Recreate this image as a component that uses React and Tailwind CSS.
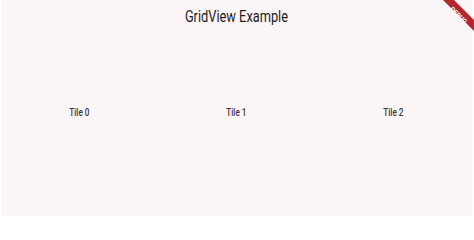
import React from 'react';

const tiles = ['Tile 0', 'Tile 1', 'Tile 2'];

const DebugBanner = () => (
    <svg className="absolute top-0 right-0" width="40" height="40" viewBox="0 0 40 40">
        <polygon points="9,0 20,0 40,20 40,31" fill="#b3262f" />
        <text
            x="0"
            y="0"
            transform="translate(24.5 15.5) rotate(45)"
            textAnchor="middle"
            dominantBaseline="central"
            fill="#ffffff"
            fontSize="6.5"
            fontWeight="700"
            fontFamily="Roboto, sans-serif"
        >
            DEBUG
        </text>
    </svg>
);

const App = () => {
    return (
        <div className="relative w-[474px] h-[219px] bg-white pl-px pr-[2px] pb-[3px] font-['Roboto',sans-serif]">
            <div className="h-full bg-[#fcf6f9] overflow-hidden">
                <header className="h-[34px] flex items-center justify-center">
                    <h1 className="text-[16px] leading-none text-[#1d1b20] scale-x-[0.8]">GridView Example</h1>
                </header>
                <div className="grid grid-cols-3">
                    {tiles.map((t) => (
                        <div key={t} className="aspect-square flex items-center justify-center">
                            <span className="text-[10px] font-medium text-[#3a373d] scale-x-[0.82]">{t}</span>
                        </div>
                    ))}
                </div>
            </div>
            <DebugBanner />
        </div>
    );
};

export default App;
